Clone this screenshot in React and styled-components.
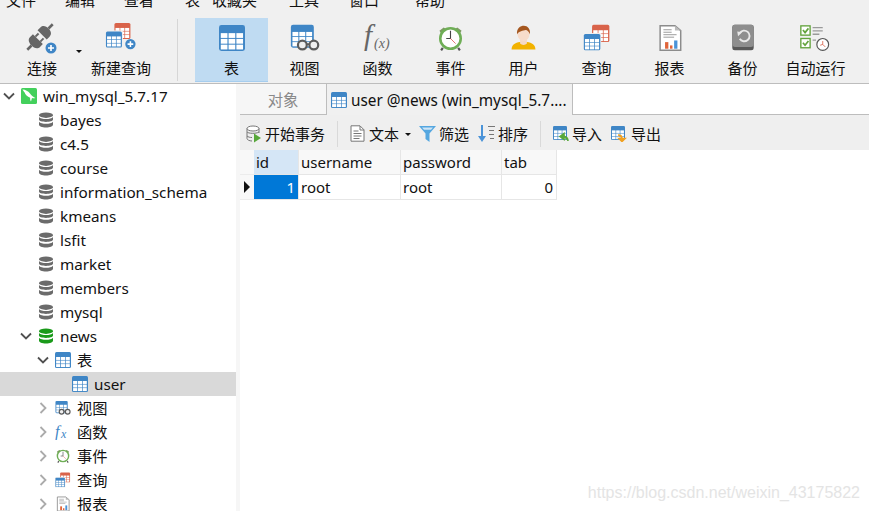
import React from 'react';
import styled, { createGlobalStyle } from 'styled-components';

const GlobalStyle = createGlobalStyle`
  html, body {
    margin: 0;
    padding: 0;
    background: #fff;
  }
  * { box-sizing: border-box; }
`
const Page = styled.div`
  position: relative;
  width: 869px;
  height: 511px;
  overflow: hidden;
  display: flex;
  flex-direction: column;
  background: #fff;
  color: #111;
  font-family: "Noto Sans", "Noto Sans CJK SC", sans-serif;
  font-size: 15px;
`
const MenuBar = styled.div`
  flex: none;
  height: 14px;
  display: flex;
  align-items: flex-end;
  padding-left: 6px;
  background: #f0f0f0;
  overflow: hidden;
`
const MenuItem = styled.span`
  flex: none;
  line-height: 20px;
  height: 20px;
  margin-bottom: 4px;
  margin-right: ${p => p.$gap}px;
`
const Toolbar = styled.div`
  flex: none;
  height: 70px;
  display: flex;
  align-items: flex-start;
  padding: 4px 0 0 8px;
  background: #f0f0f0;
  border-bottom: 1px solid #bdbdbd;
`
const Tool = styled.div`
  flex: none;
  width: ${p => p.$width || 73}px;
  height: 64px;
  display: flex;
  flex-direction: column;
  align-items: center;
  padding-top: 3px;
  background: ${p => (p.$active ? '#bfdbf2' : 'transparent')};
  border-bottom: 1px solid ${p => (p.$active ? '#a6cdee' : 'transparent')};
  line-height: 20px;
  white-space: nowrap;
`
const ToolIcon = styled.div`
  height: 34px;
  margin-bottom: 3px;
  display: flex;
  align-items: center;
  justify-content: center;
`
const DropCaret = styled.div`
  flex: none;
  width: 0;
  height: 0;
  margin: 32px 3px 0 0;
  border-left: 3px solid transparent;
  border-right: 3px solid transparent;
  border-top: 3px solid #111;
`
const ToolDivider = styled.div`
  flex: none;
  width: 1px;
  height: 62px;
  margin: 1px 17px 0 20px;
  background: #d6d6d6;
`
const Body = styled.div`
  flex: 1;
  min-height: 0;
  display: flex;
`
const Sidebar = styled.div`
  flex: none;
  width: 240px;
  padding-right: 4px;
  font-size: 15.25px;
  background: linear-gradient(90deg, #fff 236px, #f6f6f6 236px);
`
const TreeRow = styled.div`
  height: 24px;
  display: flex;
  align-items: center;
  padding-left: ${p => p.$level * 17}px;
  background: ${p => (p.$selected ? '#d9d9d9' : 'transparent')};
  white-space: nowrap;
`
const Twisty = styled.div`
  flex: none;
  width: 17px;
  margin-right: 4px;
  display: flex;
  justify-content: center;
`
const TreeLabel = styled.span`
  margin-left: 6px;
  line-height: 24px;
`
const Main = styled.div`
  flex: 1;
  min-width: 0;
  display: flex;
  flex-direction: column;
`
const TabRow = styled.div`
  flex: none;
  height: 31px;
  display: flex;
  background: #fff;
  font-size: 15.35px;
`
const Tab = styled.div`
  flex: none;
  width: ${p => p.$width}px;
  display: flex;
  align-items: center;
  justify-content: ${p => (p.$active ? 'flex-start' : 'center')};
  gap: 4px;
  padding-left: ${p => (p.$active ? 4 : 0)}px;
  background: ${p => (p.$active ? '#f0f0f0' : '#f6f6f6')};
  color: ${p => (p.$active ? '#111' : '#8a8a8a')};
  border-right: 1px solid #bdbdbd;
  border-bottom: ${p => (p.$active ? 'none' : '1px solid #bdbdbd')};
  white-space: nowrap;
`
const TabFill = styled.div`
  flex: 1;
  border-bottom: 1px solid #bdbdbd;
`
const ActionBar = styled.div`
  flex: none;
  height: 35px;
  display: flex;
  align-items: center;
  padding: 2px 0 0 6px;
  background: #efefef;
`
const Action = styled.div`
  flex: none;
  display: flex;
  align-items: center;
  gap: ${p => p.$gap || 3}px;
  margin-right: ${p => p.$after || 0}px;
  white-space: nowrap;
`
const ActionDivider = styled.div`
  flex: none;
  width: 1px;
  height: 26px;
  margin: 0 12px;
  background: #d9d9d9;
`
const SmallCaret = styled.div`
  flex: none;
  width: 0;
  height: 0;
  margin: 2px 8px 0 6px;
  border-left: 3px solid transparent;
  border-right: 3px solid transparent;
  border-top: 3px solid #111;
`
const Grid = styled.div`
  display: grid;
  grid-template-columns: 14px 45px 102px 101px 55px;
  grid-auto-rows: 25px;
  width: 317px;
`
const Corner = styled.div`
  display: flex;
  align-items: center;
  justify-content: center;
  background: #f8f8f8;
  border-bottom: 1px solid #ececec;
`
const HeadCell = styled.div`
  padding-left: 2px;
  line-height: 24px;
  background: ${p => (p.$current ? '#d5e6f6' : '#f8f8f8')};
  border-right: 1px solid #e6e6e6;
  border-bottom: 1px solid #e6e6e6;
`
const Cell = styled.div`
  padding: 0 3px 0 2px;
  line-height: 24px;
  text-align: ${p => (p.$num ? 'right' : 'left')};
  background: ${p => (p.$current ? '#0078d7' : '#fff')};
  color: ${p => (p.$current ? '#fff' : '#111')};
  border-right: 1px solid #e6e6e6;
  border-bottom: 1px solid #e6e6e6;
`
const RowMark = styled.div`
  width: 0;
  height: 0;
  border-top: 6px solid transparent;
  border-bottom: 6px solid transparent;
  border-left: 6px solid #111;
`
const Watermark = styled.div`
  position: absolute;
  right: 9px;
  bottom: 8px;
  font-family: "Liberation Sans", Arial, sans-serif;
  font-size: 16px;
  line-height: 20px;
  color: #e4e4e4;
`

const BLUE = '#3f86c6';
const RED = '#d9634a';

function Grid3({ x, y, s, color }) {
  const u = s / 16;
  return (
    <g>
      <rect x={x} y={y} width={s} height={s} rx={1.5 * u} fill={color} />
      {[0, 1, 2].map(r => [0, 1, 2].map(c => (
        <rect
          key={`${r}${c}`}
          x={x + (1.1 + c * 4.8) * u}
          y={y + (5 + r * 3.55) * u}
          width={4.1 * u}
          height={2.95 * u}
          fill="#fff"
        />
      )))}
    </g>
  );
}

const TableIcon = ({ size = 16 }) => (
  <svg width={size} height={size} viewBox="0 0 16 16"><Grid3 x={0} y={0} s={16} color={BLUE} /></svg>
);

const Badge = ({ cx, cy, r }) => (
  <g>
    <circle cx={cx} cy={cy} r={r} fill={BLUE} />
    <path d={`M${cx - r * 0.55} ${cy}H${cx + r * 0.55}M${cx} ${cy - r * 0.55}V${cy + r * 0.55}`} stroke="#fff" strokeWidth={r * 0.3} />
  </g>
);

const PlugIcon = () => (
  <svg width="34" height="34" viewBox="0 0 34 34">
    <g transform="translate(15 16) rotate(-45)" fill="#666">
      <path d="M3-6.500H7C11-6.500 12-3 12 0S11 6.500 7 6.500H3z" />
      <rect x="12" y="-1.300" width="6" height="2.600" />
      <path d="M-3-7H-7C-11-7-12-3-12 0S-11 7-7 7H-3z" />
      <rect x="-18" y="-1.300" width="6" height="2.600" />
      <rect x="-3" y="-4.500" width="4.500" height="2" />
      <rect x="-3" y="2.500" width="4.500" height="2" />
    </g>
    <Badge cx={26} cy={27} r={5.5} />
  </svg>
);

const NewQueryIcon = () => (
  <svg width="32" height="32" viewBox="0 0 34 34">
    <Grid3 x={10} y={1} s={17} color={RED} />
    <g><rect x={0} y={9} width={19} height={19} fill="#f0f0f0" /><Grid3 x={1} y={10} s={17} color={BLUE} /></g>
    <Badge cx={27} cy={23.5} r={5.5} />
  </svg>
);

const ViewIcon = ({ size = 30 }) => (
  <svg width={size} height={size} viewBox="0 0 34 34">
    <Grid3 x={1} y={2} s={26} color={BLUE} />
    <circle cx={14} cy={25} r={5} fill="#f0f0f0" stroke="#5c5c5c" strokeWidth="2.5" />
    <circle cx={27} cy={25} r={5} fill="#f0f0f0" stroke="#5c5c5c" strokeWidth="2.5" />
    <path d="M19 24h3" stroke="#5c5c5c" strokeWidth="2" />
  </svg>
);

const FuncText = styled.text`
  font-family: "Liberation Serif", serif;
  font-style: italic;
`
const FuncIcon = () => (
  <svg width="34" height="34" viewBox="0 0 34 34">
    <FuncText x="3" y="24" fontSize="29" fill="#666">f</FuncText>
    <FuncText x="13" y="27" fontSize="14" fill="#666">(x)</FuncText>
  </svg>
);

const ClockIcon = ({ size = 29 }) => (
  <svg width={size} height={size} viewBox="0 0 34 34">
    <path d="M4 8l5-4 3 2-6 5zM30 8l-5-4-3 2 6 5z" fill="#7c9a62" />
    <path d="M8 28l-2 3M26 28l2 3" stroke="#555" strokeWidth="2.5" />
    <circle cx="17" cy="17" r="12" fill="#fff" stroke="#6fae56" strokeWidth="3" />
    <path d="M17 8v9l-5 0" stroke="#444" strokeWidth="1.3" fill="none" />
    <path d="M17 17l6 6" stroke="#e0605a" strokeWidth="1" />
  </svg>
);

const UserIcon = () => (
  <svg width="29" height="29" viewBox="0 0 34 34">
    <path d="M3 30c0-6 4-8 10-9h8c6 1 10 3 10 9z" fill="#f2b200" />
    <path d="M13 18h8v5c-2 2-6 2-8 0z" fill="#f4d9c6" />
    <ellipse cx="17" cy="12" rx="7" ry="8" fill="#f7dccb" />
    <path d="M9.5 12c-1-7 4-10 8-10s8 4 7 10c-1-3-3-5-5-5-3 1-8 1-10 5z" fill="#a5571f" />
  </svg>
);

const QueryIcon = ({ size = 28 }) => (
  <svg width={size} height={size} viewBox="0 0 34 34">
    <Grid3 x={11} y={1} s={21} color={RED} />
    <rect x={0} y={11} width={22} height={22} fill="#f0f0f0" />
    <Grid3 x={1} y={12} s={20} color={BLUE} />
  </svg>
);

const ReportIcon = ({ size = 28 }) => (
  <svg width={size} height={size} viewBox="0 0 34 34">
    <path d="M5 2h18l7 6v24H5z" fill="#fff" stroke="#8c8c8c" strokeWidth="1.8" />
    <path d="M23 2v6h7z" fill="#bbb" />
    <path d="M9 7h10M9 10h10M9 13h16M9 16h13" stroke="#9a9a9a" strokeWidth="1.2" />
    <rect x="11" y="22" width="4" height="8" fill="#e0653a" />
    <rect x="17" y="26" width="3" height="4" fill="#e0653a" />
    <rect x="22" y="20" width="4" height="10" fill="#4a93d8" />
  </svg>
);

const BackupIcon = () => (
  <svg width="28" height="28" viewBox="0 0 34 34">
    <rect x="4" y="1" width="26" height="31" rx="3" fill="#595959" />
    <rect x="4" y="1" width="26" height="27" rx="3" fill="#8e8e8e" />
    <path d="M13 11a6.500 6.500 0 1 1 0 7" fill="none" stroke="#e8e8e8" strokeWidth="2.3" />
    <path d="M10 9l6 1-5 5z" fill="#e8e8e8" />
  </svg>
);

const AutoRunIcon = () => (
  <svg width="32" height="29" viewBox="0 0 38 34">
    <rect x="1" y="2" width="11" height="11" fill="#fff" stroke="#63a33d" strokeWidth="1.6" />
    <rect x="1" y="17" width="11" height="11" fill="#fff" stroke="#63a33d" strokeWidth="1.6" />
    <path d="M3.500 7l2.500 3 4-5M3.500 22l2.500 3 4-5" fill="none" stroke="#63a33d" strokeWidth="2" />
    <path d="M15 4h12M15 8h12M15 12h8M15 19h4" stroke="#9a9a9a" strokeWidth="1.6" />
    <circle cx="27" cy="24" r="7" fill="#fff" stroke="#555" strokeWidth="1.4" />
    <path d="M27 24v-4M27 24l-3 1M27 24l3 3" stroke="#d9634a" strokeWidth="1" />
  </svg>
);

const DbIcon = ({ color = '#6b6b6b' }) => (
  <svg width="16" height="16" viewBox="0 0 16 16">
    <ellipse cx="8" cy="3.2" rx="7" ry="2.7" fill={color} />
    <path d="M1 5v2.500c0 1.500 3 2.400 7 2.400s7-.9 7-2.400V5c-1 1.400-4 2-7 2S2 6.400 1 5z" fill={color} />
    <path d="M1 9.800v2.900C1 14.200 4 15.500 8 15.500s7-1.300 7-2.800V9.800c-1 1.400-4 2-7 2s-6-.6-7-2z" fill={color} />
  </svg>
);

const MysqlIcon = () => (
  <svg width="16" height="16" viewBox="0 0 16 16">
    <rect width="16" height="16" rx="1.5" fill="#43d05c" />
    <path d="M1.500 1.500c3 .2 5.500 1.500 7.500 4 1.500 2 3.500 3.500 5.500 4.500-1.200.5-2.500.4-3.500 0l-1 3.500c-.8-1.200-1-2.500-.8-3.800C6.500 9 4 6.500 3.700 4.500 3 3.800 2 2.500 1.500 1.500z" fill="#fff" />
  </svg>
);

const FxIcon = () => (
  <svg width="16" height="16" viewBox="0 0 16 16">
    <FuncText x="0" y="13" fontSize="16" fill="#3f86c6">f</FuncText>
    <FuncText x="6" y="14" fontSize="12" fill="#3f86c6">x</FuncText>
  </svg>
);

const Chevron = ({ open }) => (
  <svg width="12" height="12" viewBox="0 0 12 12">
    <path
      d={open ? 'M1 3.500l5 5 5-5' : 'M3.500 1l5 5-5 5'}
      fill="none"
      stroke={open ? '#505050' : '#ababab'}
      strokeWidth="1.8"
    />
  </svg>
);

const TxnIcon = () => (
  <svg width="16" height="18" viewBox="0 0 16 18">
    <ellipse cx="7" cy="3.5" rx="6" ry="2.5" fill="#fff" stroke="#777" />
    <path d="M1 3.500v10c0 1.300 2.500 2.500 5 2.500M13 3.500V8M1 7c1 1.500 9 2 12 0M1 11c1 1 3 1.500 5 1.500" fill="none" stroke="#777" />
    <path d="M8 8.500l7 4.500-7 4.500z" fill="#58a83a" />
  </svg>
);

const TextIcon = () => (
  <svg width="15" height="17" viewBox="0 0 15 17">
    <path d="M1 .8h9l4 4v11.400H1z" fill="#fff" stroke="#777" />
    <path d="M10 1v4h4" fill="none" stroke="#777" />
    <path d="M3.500 6h5M3.500 8.500h8M3.500 11h8M3.500 13.500h6" stroke="#777" />
  </svg>
);

const FilterIcon = () => (
  <svg width="17" height="17" viewBox="0 0 17 17">
    <path d="M0 1h17l-6.500 7.500V17l-4-3V8.500z" fill="#55a7e0" />
    <path d="M3 2.500h11l-2 2.300H5z" fill="#cfe6f7" />
  </svg>
);

const SortIcon = () => (
  <svg width="17" height="17" viewBox="0 0 17 17">
    <path d="M4 0v13" stroke="#4a93d8" strokeWidth="2" />
    <path d="M0 11h8l-4 6z" fill="#4a93d8" />
    <path d="M10 1.500h7M11 5.500h5M11 9.500h5M12 13.500h4" stroke="#777" strokeWidth="1.2" />
  </svg>
);

const TransferIcon = ({ color, out }) => (
  <svg width="16" height="16" viewBox="0 0 16 16">
    <Grid3 x={0} y={0} s={14} color={BLUE} />
    <path
      d={out ? 'M7 9c3 0 4 1 4 3.500M8 12.500h6l-3 3z' : 'M15 15c0-3-2-4.500-5-4.500M11 7.500v6l-4-3z'}
      fill={color}
      stroke={color}
      strokeWidth="1.6"
    />
  </svg>
);

const menus = [['文件', 29], ['编辑', 29], ['查看', 31], ['表', 12], ['收藏夹', 32], ['工具', 30], ['窗口', 36], ['帮助', 0]];

const tools = [
  ['表', <TableIcon size={26} />, true],
  ['视图', <ViewIcon />],
  ['函数', <FuncIcon />],
  ['事件', <ClockIcon />],
  ['用户', <UserIcon />],
  ['查询', <QueryIcon />],
  ['报表', <ReportIcon />],
  ['备份', <BackupIcon />],
  ['自动运行', <AutoRunIcon />],
];

const tree = [
  { level: 0, open: true, icon: <MysqlIcon />, label: 'win_mysql_5.7.17' },
  ...['bayes', 'c4.5', 'course', 'information_schema', 'kmeans', 'lsfit', 'market', 'members', 'mysql'].map(label => ({
    level: 1, icon: <DbIcon />, label, leaf: true,
  })),
  { level: 1, open: true, icon: <DbIcon color="#1a9a1a" />, label: 'news' },
  { level: 2, open: true, icon: <TableIcon />, label: '表' },
  { level: 3, icon: <TableIcon />, label: 'user', leaf: true, selected: true },
  { level: 2, icon: <ViewIcon size={16} />, label: '视图' },
  { level: 2, icon: <FxIcon />, label: '函数' },
  { level: 2, icon: <ClockIcon size={16} />, label: '事件' },
  { level: 2, icon: <QueryIcon size={16} />, label: '查询' },
  { level: 2, icon: <ReportIcon size={16} />, label: '报表' },
];

export default function App() {
  return (
    <Page>
      <GlobalStyle />
      <MenuBar>
        {menus.map(([name, gap]) => <MenuItem key={name} $gap={gap}>{name}</MenuItem>)}
      </MenuBar>
      <Toolbar>
        <Tool $width={68}>
          <ToolIcon><PlugIcon /></ToolIcon>
          连接
        </Tool>
        <DropCaret />
        <Tool $width={72}>
          <ToolIcon><NewQueryIcon /></ToolIcon>
          新建查询
        </Tool>
        <ToolDivider />
        {tools.map(([name, icon, active]) => (
          <Tool key={name} $active={active}>
            <ToolIcon>{icon}</ToolIcon>
            {name}
          </Tool>
        ))}
      </Toolbar>
      <Body>
        <Sidebar>
          {tree.map(node => (
            <TreeRow key={node.label + node.level} $level={node.level} $selected={node.selected}>
              <Twisty>{!node.leaf && <Chevron open={node.open} />}</Twisty>
              {node.icon}
              <TreeLabel>{node.label}</TreeLabel>
            </TreeRow>
          ))}
        </Sidebar>
        <Main>
          <TabRow>
            <Tab $width={87}>对象</Tab>
            <Tab $width={246} $active><TableIcon />user @news (win_mysql_5.7....</Tab>
            <TabFill />
          </TabRow>
          <ActionBar>
            <Action><TxnIcon />开始事务</Action>
            <ActionDivider />
            <Action $gap={4}><TextIcon />文本</Action>
            <SmallCaret />
            <Action $after={9}><FilterIcon />筛选</Action>
            <Action><SortIcon />排序</Action>
            <ActionDivider />
            <Action $gap={3} $after={9}><TransferIcon color="#58a83a" />导入</Action>
            <Action $gap={4}><TransferIcon color="#f0a020" out />导出</Action>
          </ActionBar>
          <Grid>
            <Corner />
            <HeadCell $current>id</HeadCell>
            <HeadCell>username</HeadCell>
            <HeadCell>password</HeadCell>
            <HeadCell>tab</HeadCell>
            <Corner><RowMark /></Corner>
            <Cell $num $current>1</Cell>
            <Cell>root</Cell>
            <Cell>root</Cell>
            <Cell $num>0</Cell>
          </Grid>
        </Main>
      </Body>
      <Watermark>https://blog.csdn.net/weixin_43175822</Watermark>
    </Page>
  );
}
